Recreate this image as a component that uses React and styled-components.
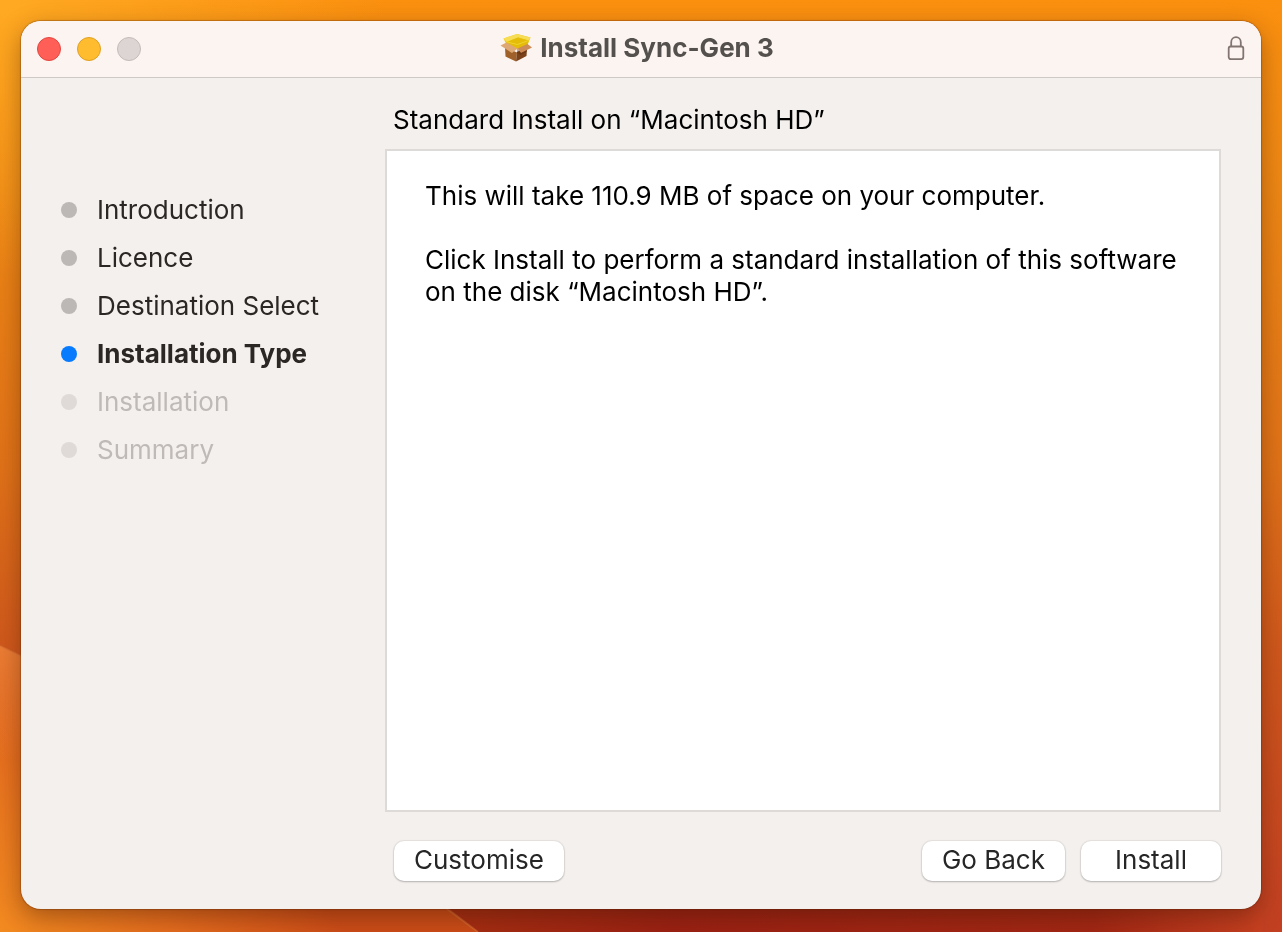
import React from 'react';
import styled, { createGlobalStyle } from 'styled-components';

const steps = [
  { label: 'Introduction', state: 'done' },
  { label: 'Licence', state: 'done' },
  { label: 'Destination Select', state: 'done' },
  { label: 'Installation Type', state: 'current' },
  { label: 'Installation', state: 'pending' },
  { label: 'Summary', state: 'pending' },
];

const bulletColors = { done: '#bcb8b5', current: '#067bfd', pending: '#dfdad8' };
const labelColors = { done: '#2b2725', current: '#2b2725', pending: '#bfbab7' };

const GlobalStyle = createGlobalStyle`
  * {
    box-sizing: border-box;
  }

  body {
    margin: 0;
    font-family: Inter, 'Liberation Sans', sans-serif;
    font-size: 26px;
    line-height: 32px;
    color: #000;
  }
`;

const Desktop = styled.div`
  display: flex;
  min-height: 100vh;
  padding: 21px 21px 23px;
  background: #ee8411;
`;

const WallpaperArt = styled.svg`
  position: fixed;
  inset: 0;
  width: 100%;
  height: 100%;
`;

const Window = styled.main`
  position: relative;
  display: flex;
  flex: 1;
  flex-direction: column;
  overflow: hidden;
  border-radius: 20px;
  background: #f4f0ed;
  box-shadow: 0 0 1px 1px rgba(90, 35, 0, 0.3), 0 8px 24px rgba(50, 20, 0, 0.38);
`;

const TitleBar = styled.header`
  display: grid;
  grid-template-columns: 1fr auto 1fr;
  align-items: center;
  height: 57px;
  padding: 0 16px;
  border-bottom: 1px solid #cfc9c6;
  background: #fcf4f0;
`;

const Lights = styled.div`
  display: flex;
  gap: 16px;
`;

const Light = styled.button`
  width: 24px;
  height: 24px;
  padding: 0;
  border: 1px solid ${props => props.$edge};
  border-radius: 50%;
  background: ${props => props.$fill};
`;

const Title = styled.h1`
  display: flex;
  align-items: center;
  gap: 8px;
  margin: 0;
  padding: 0 8px 2px 0;
  font-size: 26px;
  font-weight: 700;
  line-height: 32px;
  color: #54504d;
`;

const LockButton = styled.button`
  display: flex;
  justify-self: end;
  padding: 0 0 2px;
  border: 0;
  background: none;
`;

const Content = styled.div`
  display: grid;
  flex: 1;
  grid-template-columns: 324px 1fr;
  padding: 0 40px 28px;
`;

const StepList = styled.ol`
  margin: 0;
  padding: 108px 0 0;
  list-style: none;
`;

const Step = styled.li`
  display: flex;
  align-items: center;
  gap: 20px;
  height: 48px;
  font-weight: ${props => (props.$state === 'current' ? 700 : 400)};
  color: ${props => labelColors[props.$state]};
  white-space: nowrap;

  &::before {
    content: '';
    width: 16px;
    height: 16px;
    border-radius: 50%;
    background: ${props => bulletColors[props.$state]};
  }
`;

const Pane = styled.section`
  display: flex;
  flex-direction: column;
`;

const PaneTitle = styled.h2`
  margin: 0;
  padding: 26px 8px 13px;
  font-size: 26px;
  font-weight: 400;
  line-height: 32px;
`;

const Message = styled.div`
  flex: 1;
  padding: 29px 38px;
  border: 2px solid #dedad7;
  background: #fff;

  p {
    margin: 0 0 32px;
  }
`;

const Actions = styled.footer`
  display: flex;
  gap: 16px;
  padding: 29px 0 0 9px;
`;

const PushButton = styled.button`
  min-width: 140px;
  height: 40px;
  padding: 0 20px 2px;
  border: 0;
  border-radius: 10px;
  background: #fff;
  box-shadow: 0 0 1px 1px rgba(0, 0, 0, 0.06), 0 1px 2px rgba(0, 0, 0, 0.22);
  font: inherit;
  color: #262626;

  &:first-child {
    margin-right: auto;
  }
`;

function Wallpaper() {
  return (
    <WallpaperArt viewBox="0 0 1282 932" preserveAspectRatio="none" aria-hidden="true">
      <defs>
        <linearGradient id="sky" x1="0" y1="0" x2="0" y2="1">
          <stop offset="0" stopColor="#fb900f" />
          <stop offset="0.2" stopColor="#ee8714" />
          <stop offset="0.5" stopColor="#e07218" />
          <stop offset="0.7" stopColor="#cf571c" />
          <stop offset="1" stopColor="#c23f22" />
        </linearGradient>
        <radialGradient id="glow" cx="0" cy="0" r="0.3">
          <stop offset="0" stopColor="#ffa922" />
          <stop offset="1" stopColor="#ffa922" stopOpacity="0" />
        </radialGradient>
        <linearGradient id="petal" gradientUnits="userSpaceOnUse" x1="0" y1="932" x2="200" y2="760">
          <stop offset="0" stopColor="#f28a20" />
          <stop offset="0.5" stopColor="#e46c1e" />
          <stop offset="1" stopColor="#cc4c18" />
        </linearGradient>
        <linearGradient id="petalTop" x1="0" y1="0" x2="0" y2="1">
          <stop offset="0" stopColor="#f0853a" stopOpacity="0.8" />
          <stop offset="0.4" stopColor="#f0853a" stopOpacity="0" />
        </linearGradient>
        <linearGradient id="floor" x1="0" y1="0" x2="1" y2="0">
          <stop offset="0" stopColor="#a82f12" />
          <stop offset="0.3" stopColor="#9c2113" />
          <stop offset="0.8" stopColor="#a32714" />
          <stop offset="1" stopColor="#c64020" />
        </linearGradient>
      </defs>
      <rect width="1282" height="932" fill="url(#sky)" />
      <rect width="1282" height="932" fill="url(#glow)" />
      <rect x="420" y="890" width="842" height="42" fill="url(#floor)" />
      <path d="M0 646Q280 780 478 932H0Z" fill="url(#petal)" />
      <path d="M0 646Q280 780 478 932H0Z" fill="url(#petalTop)" />
      <path d="M0 646Q280 780 478 932" fill="none" stroke="#e07a3c" strokeOpacity="0.5" strokeWidth="2" />
    </WallpaperArt>
  );
}

function PackageIcon() {
  return (
    <svg width="32" height="32" viewBox="0 0 32 32" aria-hidden="true">
      <path d="M5 15 17 20.5 16 29.5 5.5 24.5Z" fill="#a0602a" />
      <path d="M17 20 27 15.5 26.5 24 16 29.5Z" fill="#7c4219" />
      <path d="M3.5 6.5 17 2 30.5 5.5 27.5 13 17.5 17.5 6.5 12.5Z" fill="#ecc90f" />
      <path d="M3.5 6.5 17 2 30.5 5.5 28.5 8.5 18 5.5 7 10Z" fill="#f6dd55" />
      <path d="M7 10 18 5.5 28.5 8.5 27.5 13 17.5 17.5 6.5 12.5Z" fill="#e5bd08" />
      <path d="M7 10 17.5 12.5 28.5 8.5" fill="none" stroke="#f3d83b" strokeWidth="0.8" />
      <path d="M0.5 13.5 6.5 10.5 17.5 16.5 12 21Z" fill="#dda873" />
      <path d="M17.5 16.5 27.5 12 32 15.5 21 21Z" fill="#cc8b57" />
      <path d="M17.5 17 21 21 27 18V19.5L20.5 23 17 20.5Z" fill="#5c2c0d" opacity="0.5" />
    </svg>
  );
}

function LockIcon() {
  return (
    <svg width="18" height="26" viewBox="0 0 18 26" fill="none" stroke="#827571" strokeWidth="1.8">
      <rect x="1.7" y="11.5" width="14.6" height="12.6" rx="2" />
      <path d="M4.2 11.5V7.2a4.8 5 0 0 1 9.6 0v4.3" />
    </svg>
  );
}

export default function App() {
  return (
    <Desktop>
      <GlobalStyle />
      <Wallpaper />
      <Window>
        <TitleBar>
          <Lights>
            <Light aria-label="Close" $fill="#ff5f57" $edge="#e2463f" />
            <Light aria-label="Minimise" $fill="#febc2e" $edge="#dfa023" />
            <Light aria-label="Zoom" $fill="#ddd5d3" $edge="#c4bbb9" disabled />
          </Lights>
          <Title>
            <PackageIcon />
            Install Sync-Gen 3
          </Title>
          <LockButton aria-label="Certificate">
            <LockIcon />
          </LockButton>
        </TitleBar>
        <Content>
          <StepList>
            {steps.map(step => (
              <Step key={step.label} $state={step.state}>{step.label}</Step>
            ))}
          </StepList>
          <Pane>
            <PaneTitle>Standard Install on “Macintosh HD”</PaneTitle>
            <Message>
              <p>This will take 110.9 MB of space on your computer.</p>
              <p>
                Click Install to perform a standard installation of this software
                on the disk “Macintosh HD”.
              </p>
            </Message>
            <Actions>
              <PushButton>Customise</PushButton>
              <PushButton>Go Back</PushButton>
              <PushButton>Install</PushButton>
            </Actions>
          </Pane>
        </Content>
      </Window>
    </Desktop>
  );
}
